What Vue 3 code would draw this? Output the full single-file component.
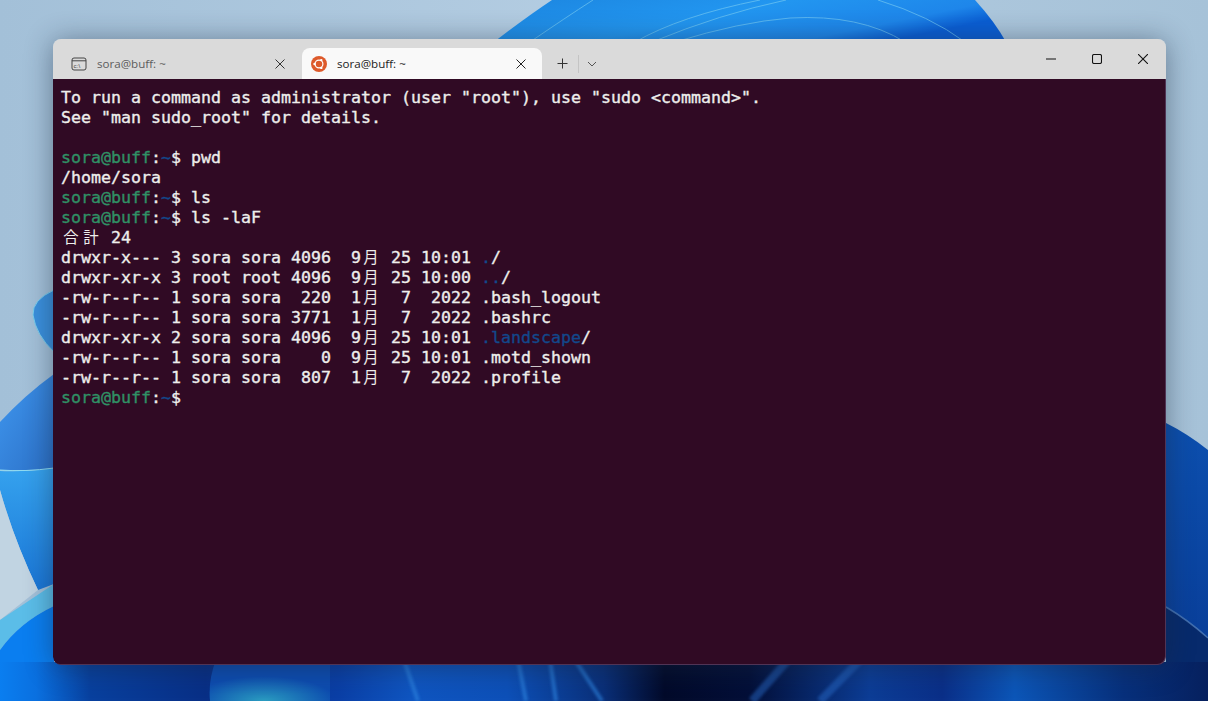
<script setup>
const g = (t) => ({ t, c: 'green' })
const b = (t) => ({ t, c: 'blue' })
const w = (t) => ({ t })
const j = (t) => ({ t, c: 'cjk' })
const prompt = (cmd) => [g('sora@buff'), w(':'), b('~'), w('$' + cmd)]
const row = (perm, n, u, size, mon, day, time, name) => [
  w(`${perm} ${n} ${u} ${u} ${size.padStart(4, ' ')}  ${mon}`), j('月'), w(` ${day.padStart(2, ' ')} ${time.padStart(5, ' ')} `), ...name,
]
const lines = [
  [w('To run a command as administrator (user "root"), use "sudo <command>".')],
  [w('See "man sudo_root" for details.')],
  [],
  prompt(' pwd'),
  [w('/home/sora')],
  prompt(' ls'),
  prompt(' ls -laF'),
  [j('合'), j('計'), w(' 24')],
  row('drwxr-x---', '3', 'sora', '4096', '9', '25', '10:01', [b('.'), w('/')]),
  row('drwxr-xr-x', '3', 'root', '4096', '9', '25', '10:00', [b('..'), w('/')]),
  row('-rw-r--r--', '1', 'sora', '220', '1', '7', '2022', [w('.bash_logout')]),
  row('-rw-r--r--', '1', 'sora', '3771', '1', '7', '2022', [w('.bashrc')]),
  row('drwxr-xr-x', '2', 'sora', '4096', '9', '25', '10:01', [b('.landscape'), w('/')]),
  row('-rw-r--r--', '1', 'sora', '0', '9', '25', '10:01', [w('.motd_shown')]),
  row('-rw-r--r--', '1', 'sora', '807', '1', '7', '2022', [w('.profile')]),
  prompt(''),
]
</script>

<template>
  <div class="desktop">
    <svg class="wallpaper" viewBox="0 0 1208 701" width="1208" height="701" aria-hidden="true">
      <defs>
        <linearGradient id="sky" x1="0" y1="0" x2="1" y2="0">
          <stop offset="0" stop-color="#a3c0d8" />
          <stop offset="0.5" stop-color="#b4cde2" />
          <stop offset="1" stop-color="#a6c2d8" />
        </linearGradient>
        <linearGradient id="top" x1="0" y1="0" x2="1" y2="0.4">
          <stop offset="0" stop-color="#1c86e0" />
          <stop offset="0.5" stop-color="#2296f0" />
          <stop offset="0.85" stop-color="#1e86ea" />
          <stop offset="1" stop-color="#0a5ed4" />
        </linearGradient>
        <linearGradient id="left" x1="0" y1="0" x2="1" y2="1">
          <stop offset="0" stop-color="#3f97ef" />
          <stop offset="1" stop-color="#2b6fc6" />
        </linearGradient>
        <linearGradient id="left2" x1="0" y1="0" x2="0" y2="1">
          <stop offset="0" stop-color="#35a2ee" />
          <stop offset="1" stop-color="#1a76d6" />
        </linearGradient>
        <linearGradient id="bottom" x1="0" y1="0" x2="1" y2="0">
          <stop offset="0" stop-color="#0a7ef0" />
          <stop offset="0.03" stop-color="#0a70e0" />
          <stop offset="0.075" stop-color="#08409e" />
          <stop offset="0.17" stop-color="#082f86" />
          <stop offset="0.28" stop-color="#0a3fa6" />
          <stop offset="0.34" stop-color="#0f55c0" />
          <stop offset="0.42" stop-color="#0d50b8" />
          <stop offset="0.5" stop-color="#0a2f78" />
          <stop offset="0.55" stop-color="#020a2a" />
          <stop offset="0.62" stop-color="#030f38" />
          <stop offset="0.72" stop-color="#0c3d96" />
          <stop offset="0.78" stop-color="#0a2f88" />
          <stop offset="0.84" stop-color="#0c56b8" />
          <stop offset="0.93" stop-color="#07307c" />
          <stop offset="1" stop-color="#06205e" />
        </linearGradient>
        <radialGradient id="teal" cx="0.45" cy="1" r="0.6">
          <stop offset="0" stop-color="#2a9cc0" />
          <stop offset="1" stop-color="#0d4cb0" />
        </radialGradient>
        <linearGradient id="right" x1="0" y1="0" x2="0" y2="1">
          <stop offset="0" stop-color="#0c4fae" />
          <stop offset="1" stop-color="#083a94" />
        </linearGradient>
        <filter id="soft" x="-20%" y="-20%" width="140%" height="140%">
          <feGaussianBlur stdDeviation="1.4" />
        </filter>
      </defs>
      <rect width="1208" height="701" fill="url(#sky)" />
      <path d="M494 42 Q525 18 552 0 L975 0 Q995 22 1006 42 Z" fill="url(#top)" />
      <g fill="none" stroke="#7fd0f2" stroke-width="1" opacity="0.6">
        <path d="M530 42 Q565 18 593 0" />
        <path d="M635 42 Q680 16 760 0" />
        <path d="M652 42 Q720 14 786 0" />
        <path d="M675 42 Q740 22 790 18 Q860 14 905 42" />
        <path d="M878 0 Q930 16 965 42" />
      </g>
      <path d="M54 290 Q32 300 33 315 Q36 335 54 352 Z" fill="#3a90dd" stroke="#7cd0ee" stroke-width="1" />
      <path d="M54 374 Q25 395 0 422 L0 470 L54 470 Z" fill="url(#left)" />
      <path d="M0 471 Q25 472 54 468 L54 584 L38 590 Q14 540 0 490 Z" fill="url(#left2)" />
      <path d="M0 470 Q25 472 54 468" fill="none" stroke="#8fdcf2" stroke-width="1" />
      <path d="M0 490 Q14 540 38 590 L0 620 Z" fill="#c1d4e2" />
      <path d="M0 620 L54 584 L54 606 Q20 622 0 650 Z" fill="#5bbde8" />
      <path d="M0 650 Q20 622 54 606 L54 701 L0 701 Z" fill="#0a7ef0" />
      <path d="M1166 423 Q1188 434 1208 450 L1208 701 L1166 701 Z" fill="url(#right)" />
      <path d="M1166 607 Q1188 620 1208 638 L1208 701 L1166 701 Z" fill="#072a6c" />
      <path d="M1166 607 Q1188 620 1208 638" fill="none" stroke="#5a86c0" stroke-width="1.5" opacity="0.7" />
      <rect y="662" width="1208" height="39" fill="url(#bottom)" />
      <path d="M216 660 Q208 680 210 701 L330 701 L330 660 Z" fill="url(#teal)" />
      <g fill="none" stroke="#2f86e2" stroke-width="4" opacity="0.6" filter="url(#soft)">
        <path d="M404 660 L418 701" />
        <path d="M518 660 L526 701" />
        <path d="M550 660 L556 701" />
        <path d="M575 660 L602 701" />
      </g>
      <g fill="none" stroke="#2a6fd0" stroke-width="8" opacity="0.45" filter="url(#soft)">
        <path d="M788 660 L752 701" />
        <path d="M860 660 L820 701" />
      </g>
    </svg>

    <section class="window">
      <header class="titlebar">
        <div class="tab">
          <svg class="tab-icon" viewBox="0 0 16 16" width="16" height="16">
            <rect x="1" y="2" width="14" height="12" rx="2" fill="none" stroke="#444" stroke-width="1" />
            <path d="M1 4.8 H15" stroke="#444" stroke-width="1" />
            <text x="2.6" y="11.6" font-size="6.2" fill="#444" font-family="Liberation Sans, sans-serif">c:\</text>
          </svg>
          <span class="tab-label">sora@buff: ~</span>
          <svg class="close" viewBox="0 0 10 10" width="10" height="10">
            <path d="M.5 .5 9.5 9.5M9.5 .5 .5 9.5" stroke="#333" stroke-width="1" />
          </svg>
        </div>
        <div class="tab active">
          <svg class="tab-icon" viewBox="0 0 16 16" width="16" height="16">
            <circle cx="8" cy="8" r="8" fill="#dd5a2b" />
            <circle cx="8" cy="8" r="3.9" fill="none" stroke="#fff" stroke-width="1.2" />
            <circle cx="3.5" cy="8" r="1.2" fill="#fff" />
            <circle cx="10.3" cy="4.1" r="1.2" fill="#fff" />
            <circle cx="10.3" cy="11.9" r="1.2" fill="#fff" />
          </svg>
          <span class="tab-label">sora@buff: ~</span>
          <svg class="close" viewBox="0 0 10 10" width="10" height="10">
            <path d="M.5 .5 9.5 9.5M9.5 .5 .5 9.5" stroke="#222" stroke-width="1" />
          </svg>
        </div>
        <div class="new-tab">
          <svg viewBox="0 0 11 11" width="11" height="11">
            <path d="M5.5 .5V10.5M.5 5.5H10.5" stroke="#333" stroke-width="1" />
          </svg>
          <i class="divider"></i>
          <svg viewBox="0 0 10 6" width="10" height="6">
            <path d="M1 1 5 5 9 1" fill="none" stroke="#555" stroke-width="1" />
          </svg>
        </div>
        <div class="controls">
          <span class="ctl"><svg viewBox="0 0 10 10" width="10" height="10"><path d="M0 5H10" stroke="#111" stroke-width="1.2" /></svg></span>
          <span class="ctl"><svg viewBox="0 0 10 10" width="10" height="10"><rect x=".5" y=".5" width="9" height="9" rx="1.6" fill="none" stroke="#111" stroke-width="1.1" /></svg></span>
          <span class="ctl"><svg viewBox="0 0 10 10" width="10" height="10"><path d="M0 0 10 10M10 0 0 10" stroke="#111" stroke-width="1.1" /></svg></span>
        </div>
      </header>
      <main class="terminal">
        <div v-for="(line, i) in lines" :key="i" class="line">
          <span v-for="(s, k) in line" :key="k" :class="s.c">{{ s.t }}</span>
        </div>
      </main>
    </section>
  </div>
</template>

<style scoped>
.desktop {
  position: relative;
  width: 1208px;
  height: 701px;
  overflow: hidden;
  box-sizing: border-box;
  padding: 39px 42px 36px 53px;
}
.wallpaper {
  position: absolute;
  left: 0;
  top: 0;
}
.window {
  position: relative;
  height: 100%;
  display: flex;
  flex-direction: column;
  border-radius: 8px;
  overflow: hidden;
  box-shadow: 0 2px 28px rgba(25, 40, 60, 0.48);
}
.titlebar {
  height: 40px;
  flex: none;
  display: flex;
  align-items: flex-end;
  background: #dadada;
  padding-left: 9px;
}
.tab {
  width: 240px;
  height: 31px;
  box-sizing: border-box;
  display: flex;
  align-items: center;
  padding: 0 17px 0 9px;
  font: 11.6px "Open Sans", "Noto Sans", sans-serif;
  color: #5c5c5c;
}
.tab.active {
  background: #f9f9f9;
  border-radius: 8px 8px 0 0;
  color: #222;
  padding-right: 16px;
}
.tab-icon {
  flex: none;
  margin-right: 10px;
}
.tab-label {
  flex: 1;
}
.new-tab {
  height: 31px;
  display: flex;
  align-items: center;
  padding-left: 15px;
}
.divider {
  width: 1px;
  height: 18px;
  background: #c4c4c4;
  margin: 0 8px 0 10px;
}
.controls {
  margin-left: auto;
  align-self: flex-start;
  display: flex;
  height: 40px;
}
.ctl {
  width: 46px;
  height: 40px;
  display: flex;
  align-items: center;
  justify-content: center;
}
.terminal {
  flex: 1;
  background: #300a24;
  padding: 9px 8px 0;
  color: #eeeeec;
  font-family: "DejaVu Sans Mono", "Noto Sans CJK JP", monospace;
  font-size: 16.61px;
  line-height: 20px;
  -webkit-text-stroke: 0.35px currentColor;
  box-shadow: inset -1px -1px 0 rgba(130, 115, 160, 0.4);
  border-radius: 0 0 8px 8px;
}
.line {
  height: 20px;
  white-space: pre;
}
.green {
  color: #2f9165;
}
.blue {
  color: #12488b;
}
.cjk {
  display: inline-block;
  width: 20px;
  height: 16px;
  line-height: 16px;
  font-family: "Noto Sans CJK JP", sans-serif;
  font-size: 15.4px;
  -webkit-text-stroke: 0;
  text-align: center;
}
</style>
